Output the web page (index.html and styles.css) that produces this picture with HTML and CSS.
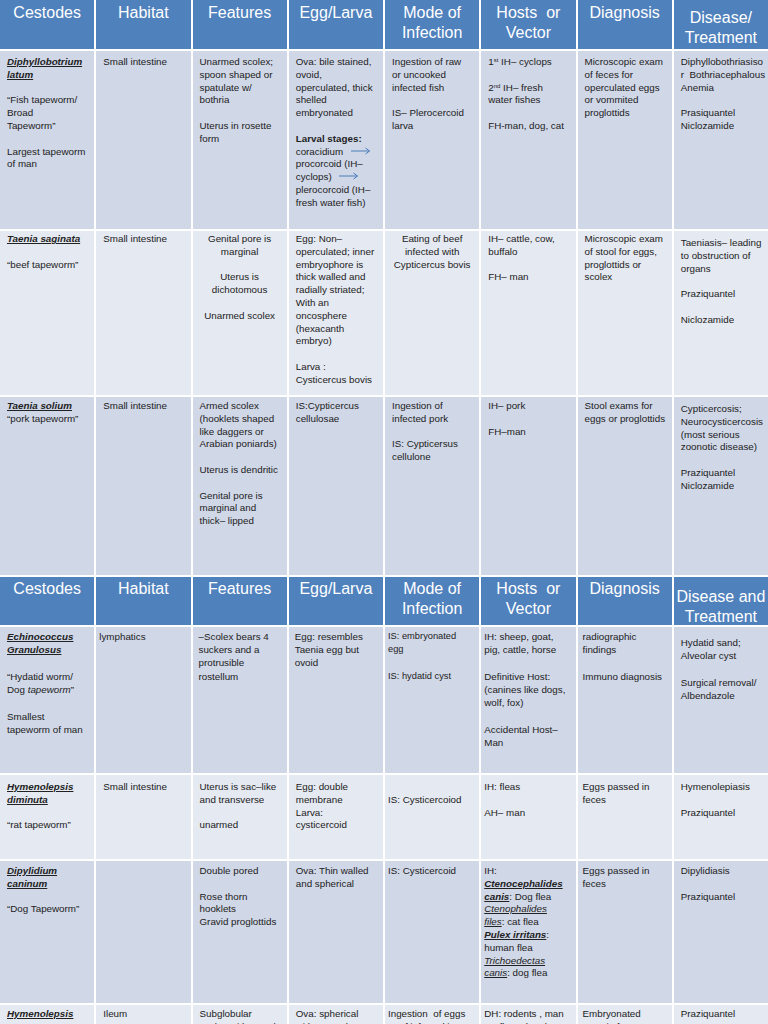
FILE: index.html
```html
<!DOCTYPE html>
<html>
<head>
<meta charset="utf-8">
<title>Cestodes</title>
<link rel="stylesheet" href="styles.css">
</head>
<body>
<div class="sheet">
  <div class="row head h1">
    <div class="c">Cestodes</div>
    <div class="c">Habitat</div>
    <div class="c">Features</div>
    <div class="c">Egg/Larva</div>
    <div class="c">Mode of<br>Infection</div>
    <div class="c">Hosts&nbsp; or<br>Vector</div>
    <div class="c">Diagnosis</div>
    <div class="c dis">Disease/<br>Treatment</div>
  </div>

  <div class="row body dark r1">
    <div class="c"><p><span class="sp">Diphyllobotrium<br>latum</span></p><p>“Fish tapeworm/<br>Broad<br>Tapeworm”</p><p>Largest tapeworm<br>of man</p></div>
    <div class="c"><p>Small intestine</p></div>
    <div class="c"><p>Unarmed scolex;<br>spoon shaped or<br>spatulate w/<br>bothria</p><p>Uterus in rosette<br>form</p></div>
    <div class="c"><p>Ova: bile stained,<br>ovoid,<br>operculated, thick<br>shelled<br>embryonated</p><p><b>Larval stages:</b><br>coracidium <svg class="arr" width="20" height="8" viewBox="0 0 20 8"><path d="M0 4H18.5M14.5 1L18.5 4L14.5 7" fill="none" stroke="#4a7ebb" stroke-width="1"/></svg><br>procorcoid (IH–<br>cyclops) <svg class="arr" width="20" height="8" viewBox="0 0 20 8"><path d="M0 4H18.5M14.5 1L18.5 4L14.5 7" fill="none" stroke="#4a7ebb" stroke-width="1"/></svg><br>plerocorcoid (IH–<br>fresh water fish)</p></div>
    <div class="c"><p>Ingestion of raw<br>or uncooked<br>infected fish</p><p>IS– Plerocercoid<br>larva</p></div>
    <div class="c"><p>1<sup>st</sup> IH– cyclops</p><p>2<sup>nd</sup> IH– fresh<br>water fishes</p><p>FH-man, dog, cat</p></div>
    <div class="c"><p>Microscopic exam<br>of feces for<br>operculated eggs<br>or vommited<br>proglottids</p></div>
    <div class="c"><p>Diphyllobothriasiso<br>r&nbsp; Bothriacephalous<br>Anemia</p><p>Prasiquantel<br>Niclozamide</p></div>
  </div>

  <div class="row body light r2">
    <div class="c"><p><span class="sp">Taenia saginata</span></p><p>“beef tapeworm”</p></div>
    <div class="c"><p>Small intestine</p></div>
    <div class="c mid"><p>Genital pore is<br>marginal</p><p>Uterus is<br>dichotomous</p><p>Unarmed scolex</p></div>
    <div class="c"><p>Egg: Non–<br>operculated; inner<br>embryophore is<br>thick walled and<br>radially striated;<br>With an<br>oncosphere<br>(hexacanth<br>embryo)</p><p>Larva :<br>Cysticercus bovis</p></div>
    <div class="c mid"><p>Eating of beef<br>infected with<br>Cypticercus bovis</p></div>
    <div class="c"><p>IH– cattle, cow,<br>buffalo</p><p>FH– man</p></div>
    <div class="c"><p>Microscopic exam<br>of stool for eggs,<br>proglottids or<br>scolex</p></div>
    <div class="c low"><p>Taeniasis– leading<br>to obstruction of<br>organs</p><p>Praziquantel</p><p>Niclozamide</p></div>
  </div>

  <div class="row body dark r3">
    <div class="c"><p><span class="sp">Taenia solium</span><br>“pork tapeworm”</p></div>
    <div class="c"><p>Small intestine</p></div>
    <div class="c"><p>Armed scolex<br>(hooklets shaped<br>like daggers or<br>Arabian poniards)</p><p>Uterus is dendritic</p><p>Genital pore is<br>marginal and<br>thick– lipped</p></div>
    <div class="c"><p>IS:Cypticercus<br>cellulosae</p></div>
    <div class="c"><p>Ingestion of<br>infected pork</p><p>IS: Cypticersus<br>cellulone</p></div>
    <div class="c"><p>IH– pork</p><p>FH–man</p></div>
    <div class="c"><p>Stool exams for<br>eggs or proglottids</p></div>
    <div class="c low"><p>Cypticercosis;<br>Neurocysticercosis<br>(most serious<br>zoonotic disease)</p><p>Praziquantel<br>Niclozamide</p></div>
  </div>

  <div class="row head h2">
    <div class="c">Cestodes</div>
    <div class="c">Habitat</div>
    <div class="c">Features</div>
    <div class="c">Egg/Larva</div>
    <div class="c">Mode of<br>Infection</div>
    <div class="c">Hosts&nbsp; or<br>Vector</div>
    <div class="c">Diagnosis</div>
    <div class="c dis">Disease and<br>Treatment</div>
  </div>

  <div class="row body dark r4 t2">
    <div class="c"><p><span class="sp">Echinococcus<br>Granulosus</span></p><p>“Hydatid worm/<br>Dog <i>tapeworm</i>”</p><p>Smallest<br>tapeworm of man</p></div>
    <div class="c"><p>lymphatics</p></div>
    <div class="c"><p>–Scolex bears 4<br>suckers and a<br>protrusible<br>rostellum</p></div>
    <div class="c"><p>Egg: resembles<br>Taenia egg but<br>ovoid</p></div>
    <div class="c small"><p>IS: embryonated<br>egg</p><p>IS: hydatid cyst</p></div>
    <div class="c"><p>IH: sheep, goat,<br>pig, cattle, horse</p><p>Definitive Host:<br>(canines like dogs,<br>wolf, fox)</p><p>Accidental Host–<br>Man</p></div>
    <div class="c"><p>radiographic<br>findings</p><p>Immuno diagnosis</p></div>
    <div class="c lower"><p>Hydatid sand;<br>Alveolar cyst</p><p>Surgical removal/<br>Albendazole</p></div>
  </div>

  <div class="row body light r5 t2">
    <div class="c"><p><span class="sp">Hymenolepsis<br>diminuta</span></p><p>“rat tapeworm”</p></div>
    <div class="c"><p>Small intestine</p></div>
    <div class="c"><p>Uterus is sac–like<br>and transverse</p><p>unarmed</p></div>
    <div class="c"><p>Egg: double<br>membrane<br>Larva:<br>cysticercoid</p></div>
    <div class="c drop"><p>IS: Cysticercoiod</p></div>
    <div class="c"><p>IH: fleas</p><p>AH– man</p></div>
    <div class="c"><p>Eggs passed in<br>feces</p></div>
    <div class="c"><p>Hymenolepiasis</p><p>Praziquantel</p></div>
  </div>

  <div class="row body dark r6 t2">
    <div class="c"><p><span class="sp">Dipylidium<br>caninum</span></p><p>“Dog Tapeworm”</p></div>
    <div class="c"></div>
    <div class="c"><p>Double pored</p><p>Rose thorn<br>hooklets<br>Gravid proglottids</p></div>
    <div class="c"><p>Ova: Thin walled<br>and spherical</p></div>
    <div class="c"><p>IS: Cysticercoid</p></div>
    <div class="c"><p>IH:<br><span class="sp">Ctenocephalides<br>canis</span>: Dog flea<br><span class="spi">Ctenophalides<br>files</span>: cat flea<br><span class="sp">Pulex irritans</span>:<br>human flea<br><span class="spi">Trichoedectas<br>canis</span>: dog flea</p></div>
    <div class="c"><p>Eggs passed in<br>feces</p></div>
    <div class="c"><p>Dipylidiasis</p><p>Praziquantel</p></div>
  </div>

  <div class="row body light r7 t2">
    <div class="c"><p><span class="sp">Hymenolepsis</span><br>nana</p></div>
    <div class="c"><p>Ileum</p></div>
    <div class="c"><p>Subglobular<br>scolex with 4 suckers</p></div>
    <div class="c"><p>Ova: spherical<br>with 2 membranes</p></div>
    <div class="c"><p>Ingestion&nbsp; of eggs<br>or of infected insects</p></div>
    <div class="c"><p>DH: rodents , man<br>IH: fleas, beetles</p></div>
    <div class="c"><p>Embryonated<br>eggs in feces</p></div>
    <div class="c"><p>Praziquantel</p></div>
  </div>
</div>
</body>
</html>
```

FILE: styles.css
```css
html, body {
  margin: 0;
  padding: 0;
  background: #ffffff;
}

.sheet {
  width: 768px;
  display: flex;
  flex-direction: column;
  gap: 2px;
  background: #ffffff;
}

.row {
  display: grid;
  grid-template-columns: repeat(8, 1fr);
  gap: 2px;
}

.c {
  min-width: 0;
  overflow: hidden;
  white-space: nowrap;
}

/* header rows */
.head .c {
  background: #4f81bd;
  color: #ffffff;
  font-family: "Liberation Sans", Arial, sans-serif;
  font-size: 16px;
  line-height: 20px;
  text-align: center;
  padding-top: 3px;
  box-sizing: border-box;
}
.h1 { height: 49px; }
.h2 { height: 48px; }
.h2 .c { padding-top: 2px; }
.h1 .dis { padding-top: 8px; }
.h2 .dis { padding-top: 10px; }

/* body rows */
.body .c {
  font-family: "Liberation Sans", Arial, sans-serif;
  font-size: 9.8px;
  line-height: 12.8px;
  color: #222222;
  padding: 5px 2px 0 7px;
  box-sizing: border-box;
}
.dark .c { background: #d0d7e7; }
.light .c { background: #e5e9f1; }

.body p { margin: 0 0 12.8px 0; }
.body p:last-child { margin-bottom: 0; }

.r1 { height: 178px; }
.r2 { height: 164px; }
.r3 { height: 178px; }
.r4 { height: 146px; }
.r5 { height: 84px; }
.r6 { height: 142px; }
.r7 { height: 100px; }

.r1 .c { padding-top: 5px; }
.r2 .c { padding-top: 2px; }
.r3 .c { padding-top: 3px; }
.r4 .c { padding-top: 3px; line-height: 13.2px; }
.r4 p { margin-bottom: 13.4px; }
.r5 .c { padding-top: 6px; }
.r6 .c { padding-top: 4px; }
.r7 .c { padding-top: 3px; }

.r2 .low, .r3 .low { padding-top: 6px; }
.r4 .lower { padding-top: 9px; }
.r5 .drop { padding-top: 19px; }

/* second-table right columns sit a little closer to the edge */
.t2 .c:nth-child(5) { padding-left: 3px; }
.t2 .c:nth-child(6) { padding-left: 3px; }
.t2 .c:nth-child(7) { padding-left: 5px; }
.r4 .c:nth-child(2) { padding-left: 3px; }
.r4 .c:nth-child(3),
.r4 .c:nth-child(4) { padding-left: 6px; }

.r4 .small { font-size: 9.3px; }

.mid { text-align: center; padding-left: 2px !important; }

.sp {
  font-weight: bold;
  font-style: italic;
  text-decoration: underline;
  text-underline-offset: 1px;
}
.spi {
  font-style: italic;
  text-decoration: underline;
  text-underline-offset: 1px;
}

sup {
  font-size: 6px;
  line-height: 0;
  vertical-align: 3px;
}

.arr {
  vertical-align: 0px;
  margin-left: 5px;
}
```
